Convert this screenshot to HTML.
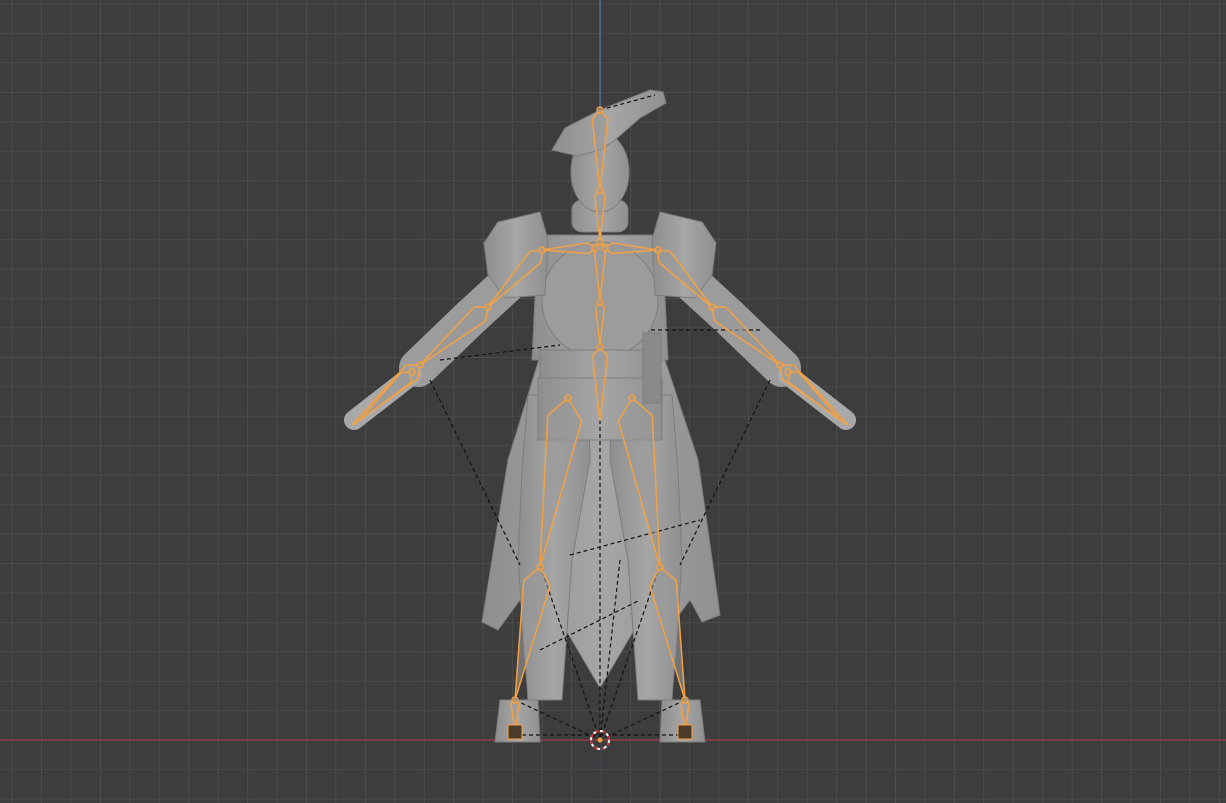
<!DOCTYPE html>
<html><head><meta charset="utf-8"><style>
html,body{margin:0;padding:0;background:#3d3d3d;width:1226px;height:803px;overflow:hidden}
svg{display:block}
</style></head><body>
<svg id="s" width="1226" height="803" viewBox="0 0 1226 803" xmlns="http://www.w3.org/2000/svg">
<defs>
<pattern id="g" x="11.6" y="3.6" width="29.45" height="29.45" patternUnits="userSpaceOnUse">
<path d="M0 0H29.45M0 0V29.45" stroke="#535353" stroke-width="1.3" fill="none"/>
</pattern>
<linearGradient id="bd" x1="0" y1="0" x2="1" y2="0">
<stop offset="0" stop-color="#8e8e8e"/><stop offset="0.5" stop-color="#a6a6a6"/><stop offset="1" stop-color="#909090"/>
</linearGradient>
</defs>
<rect width="1226" height="803" fill="#3d3d3d"/>
<rect width="1226" height="803" fill="url(#g)"/>
<line x1="600" y1="0" x2="600" y2="110" stroke="#4a6fa8" stroke-width="1.3"/>
<line x1="600" y1="740" x2="600" y2="803" stroke="#2a3a55" stroke-width="1.3" stroke-dasharray="3 2"/>
<line x1="0" y1="740" x2="1226" y2="740" stroke="#8e3b45" stroke-width="1.5"/>
<g fill="url(#bd)" stroke="#7d7d7d" stroke-width="1">
<polygon points="548,330 508,460 482,622 498,630 520,600 540,640 560,620 600,688 640,620 660,640 690,600 702,622 720,615 698,460 655,330"/>
<path d="M520 272 L470 318 L418 368" stroke="#9c9c9c" stroke-width="38" stroke-linecap="round" fill="none"/>
<path d="M680 272 L730 318 L782 368" stroke="#9c9c9c" stroke-width="38" stroke-linecap="round" fill="none"/>
<path d="M412 375 L354 420" stroke="#a8a8a8" stroke-width="20" stroke-linecap="round" fill="none"/>
<path d="M788 375 L846 420" stroke="#a8a8a8" stroke-width="20" stroke-linecap="round" fill="none"/>
<polygon points="528,395 588,395 590,460 572,560 562,700 528,700 518,560 522,470"/>
<polygon points="672,395 612,395 610,460 628,560 638,700 672,700 682,560 678,470"/>
<path d="M500 700 L538 700 L540 742 L495 742 Z"/>
<path d="M700 700 L662 700 L660 742 L705 742 Z"/>
<path d="M538 235 L662 235 L668 360 L532 360 Z"/>
<circle cx="600" cy="300" r="58" fill="#9c9c9c"/>
<rect x="540" y="350" width="120" height="30"/>
<rect x="538" y="378" width="124" height="62"/>
<polygon points="484,243 498,222 540,212 548,240 545,295 505,298 488,275"/>
<polygon points="716,243 702,222 660,212 652,240 655,295 695,298 712,275"/>
<rect x="572" y="200" width="56" height="32" rx="10"/>
<ellipse cx="600" cy="172" rx="29" ry="40"/>
<polygon points="552,150 565,128 600,110 650,90 663,92 666,103 640,118 615,140 600,150 578,156"/>
<rect x="643" y="333" width="18" height="70" fill="#8a8a8a"/>
</g>
<g stroke="#111" stroke-width="1.2" stroke-dasharray="4 3" fill="none">
<line x1="600" y1="110" x2="655" y2="95"/>
<line x1="430" y1="380" x2="520" y2="565"/>
<line x1="770" y1="380" x2="680" y2="565"/>
<line x1="440" y1="360" x2="560" y2="345"/>
<line x1="760" y1="330" x2="650" y2="330"/>
<line x1="540" y1="565" x2="600" y2="740"/>
<line x1="660" y1="565" x2="600" y2="740"/>
<line x1="515" y1="700" x2="600" y2="740"/>
<line x1="685" y1="700" x2="600" y2="740"/>
<line x1="515" y1="735" x2="685" y2="735"/>
<line x1="570" y1="555" x2="700" y2="520"/>
<line x1="600" y1="420" x2="600" y2="740"/>
<line x1="620" y1="560" x2="600" y2="740"/>
<line x1="540" y1="650" x2="640" y2="600"/>
</g>
<g id="bones" fill="#9a9a9a" fill-opacity="0.6" stroke="#f5a142" stroke-width="1.5" stroke-linejoin="round"></g>
<rect x="508" y="725" width="14" height="14" fill="#4a3a2a" stroke="#f5a142"/>
<rect x="678" y="725" width="14" height="14" fill="#4a3a2a" stroke="#f5a142"/>
<circle cx="600" cy="740" r="9" fill="none" stroke="#fff" stroke-width="2" stroke-dasharray="4 3"/>
<circle cx="600" cy="740" r="9" fill="none" stroke="#c33" stroke-width="2" stroke-dasharray="3 4" stroke-dashoffset="4"/>
<circle cx="600" cy="740" r="2.5" fill="#f5a142"/>
</svg>
<script>
var B=[[600,110,600,188],[600,190,600,240],[600,242,600,300],[600,302,600,345],[600,347,600,420],
[595,248,542,250],[605,248,658,250],[542,250,488,307],[658,250,712,307],[488,307,420,365],[712,307,780,365],
[420,365,352,425],[780,365,848,425],[412,372,360,420],[788,372,840,420],
[568,398,540,567],[632,398,660,567],[540,567,515,700],[660,567,685,700],[515,700,515,732],[685,700,685,732]];
var g=document.getElementById('bones'),ns='http://www.w3.org/2000/svg';
B.forEach(function(b){var dx=b[2]-b[0],dy=b[3]-b[1],L=Math.hypot(dx,dy),ux=dx/L,uy=dy/L,w=Math.max(4,L*0.1);
var mx=b[0]+dx*0.12,my=b[1]+dy*0.12,px=-uy*w,py=ux*w;
var p=document.createElementNS(ns,'polygon');
p.setAttribute('points',[b[0],b[1],mx+px,my+py,b[2],b[3],mx-px,my-py].join(' '));g.appendChild(p);
var c=document.createElementNS(ns,'circle');c.setAttribute('cx',b[0]);c.setAttribute('cy',b[1]);c.setAttribute('r',3);g.appendChild(c);});
</script>
</body></html>
